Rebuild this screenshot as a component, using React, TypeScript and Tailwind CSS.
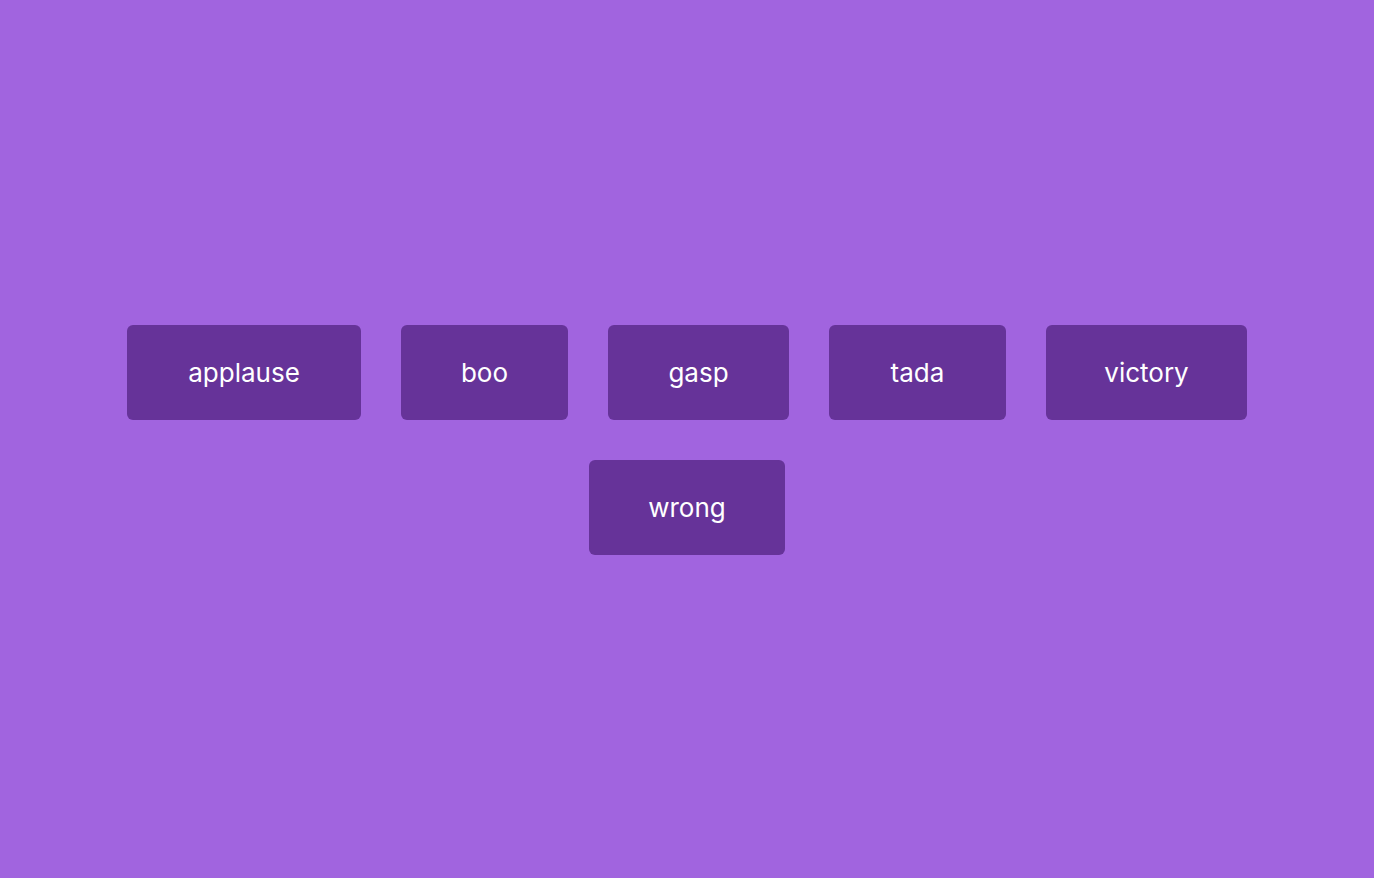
const sounds = [
  { name: "applause", w: "w-[234px]" },
  { name: "boo", w: "w-[167px]" },
  { name: "gasp", w: "w-[181px]" },
  { name: "tada", w: "w-[177px]" },
  { name: "victory", w: "w-[201px]" },
  { name: "wrong", w: "w-[196px]" },
];

export default function App() {
  return (
    <div className="flex h-screen flex-wrap content-center items-center justify-center overflow-hidden bg-[#a164df] pt-[2px] text-center font-['Inter','Noto_Sans',sans-serif]">
      {sounds.map((s) => (
        <button
          key={s.name}
          className={`m-5 flex h-[95px] ${s.w} cursor-pointer items-center justify-center rounded-[6px] bg-[#663399] text-[26px] leading-none text-white`}
        >
          {s.name}
        </button>
      ))}
    </div>
  );
}
